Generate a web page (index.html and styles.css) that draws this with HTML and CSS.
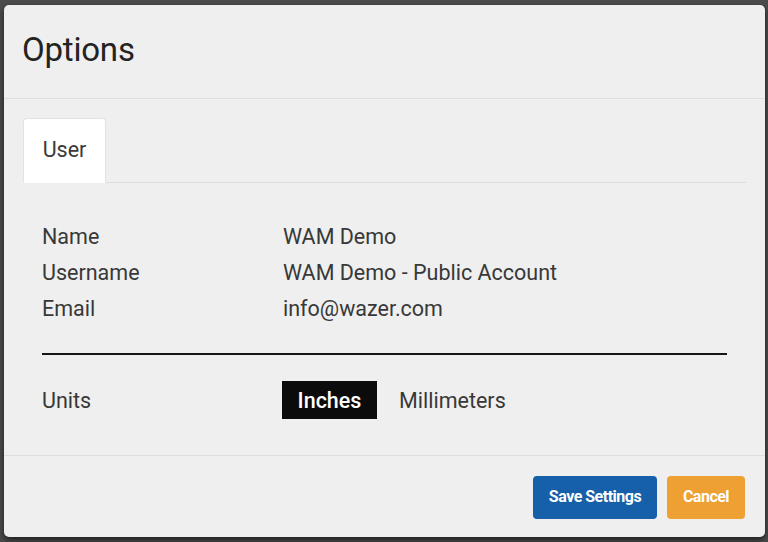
FILE: index.html
```html
<!DOCTYPE html>
<html>
<head>
<meta charset="utf-8">
<link rel="stylesheet" href="styles.css">
</head>
<body>
<div class="dialog">
  <div class="header"><h1 class="title">Options</h1></div>
  <div class="body">
    <div class="tabs">
      <div class="tab active">User</div>
    </div>
    <div class="pane">
      <div class="info">
        <div class="label">Name</div><div class="value">WAM Demo</div>
        <div class="label">Username</div><div class="value">WAM Demo - Public Account</div>
        <div class="label">Email</div><div class="value">info@wazer.com</div>
      </div>
      <div class="sep"></div>
      <div class="units">
        <div class="label">Units</div>
        <div class="toggle">
          <span class="opt selected">Inches</span>
          <span class="opt">Millimeters</span>
        </div>
      </div>
    </div>
  </div>
  <div class="footer">
    <button class="btn btn-save">Save Settings</button>
    <button class="btn btn-cancel">Cancel</button>
  </div>
</div>
</body>
</html>
```
FILE: styles.css
```css
html, body {
  margin: 0;
  padding: 0;
}
body {
  width: 768px;
  height: 542px;
  background: #4b4b4b;
  font-family: Roboto, "Liberation Sans", sans-serif;
  color: #383838;
  overflow: hidden;
}
.dialog {
  margin: 5px 0 0 4px;
  width: 761px;
  height: 532px;
  background: #efefef;
  border-radius: 5px;
  box-shadow: 0 3px 6px rgba(0,0,0,0.6);
  display: flex;
  flex-direction: column;
}
.header {
  height: 94px;
  flex: none;
  box-sizing: border-box;
  padding: 0 0 4px 18px;
  border-bottom: 1px solid #dedede;
  display: flex;
  align-items: center;
}
.title {
  margin: 0;
  font-size: 33px;
  font-weight: 400;
  color: #232323;
  letter-spacing: -0.2px;
}
.body {
  flex: 1;
  padding: 19px 19px 0 19px;
  border-bottom: 1px solid #dedede;
}
.tabs {
  display: flex;
  border-bottom: 1px solid #dcdcdc;
}
.tab {
  width: 81px;
  height: 61px;
  margin-bottom: -1px;
  padding-bottom: 2px;
  background: #fff;
  border: 1px solid #e2e2e2;
  border-bottom: 1px solid #fff;
  border-radius: 4px 4px 0 0;
  display: flex;
  align-items: center;
  justify-content: center;
  font-size: 21.5px;
  color: #3a3a3a;
}
.pane {
  padding: 36px 19px 0 19px;
}
.info {
  display: grid;
  grid-template-columns: 241px 1fr;
  line-height: 36px;
  font-size: 21.5px;
}
.sep {
  margin: 26px 0;
  height: 2px;
  background: #151515;
}
.units {
  display: grid;
  grid-template-columns: 240px 1fr;
  align-items: center;
  font-size: 21.5px;
}
.toggle {
  display: flex;
  align-items: center;
  gap: 5px;
}
.opt {
  height: 38px;
  padding: 0 17px;
  display: flex;
  align-items: center;
  color: #383838;
}
.opt.selected {
  width: 95px;
  padding: 0;
  justify-content: center;
  background: #0b0b0b;
  color: #fff;
  font-weight: 500;
}
.footer {
  height: 81px;
  flex: none;
  box-sizing: border-box;
  padding: 20px 20px 0 0;
  display: flex;
  justify-content: flex-end;
  gap: 10px;
}
.btn {
  height: 43px;
  padding: 0 0 3px 0;
  border: none;
  border-radius: 4px;
  font-family: Roboto, "Liberation Sans", sans-serif;
  font-size: 16px;
  font-weight: 700;
  letter-spacing: -0.5px;
  color: #fff;
}
.btn-save {
  width: 124px;
  background: #1660a9;
}
.btn-cancel {
  width: 78px;
  background: #eea033;
}
```
